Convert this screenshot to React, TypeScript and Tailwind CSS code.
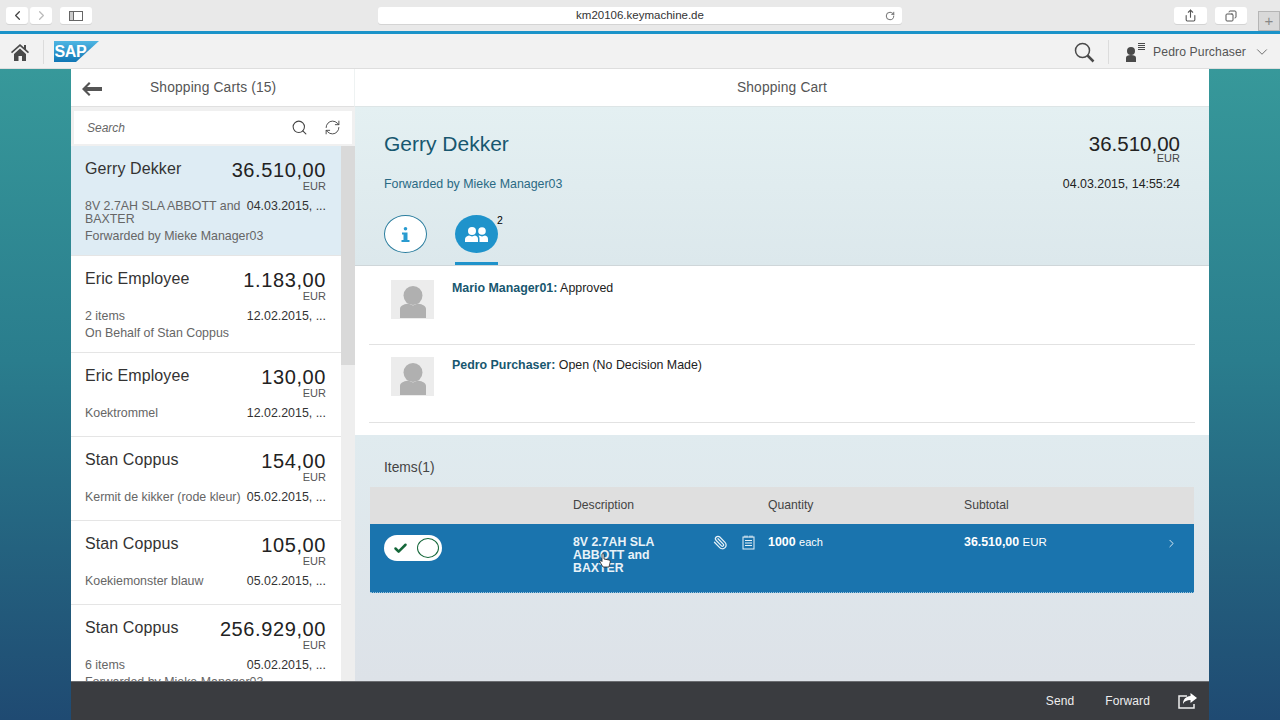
import { ChevronLeft, ChevronRight, ChevronDown, Search, RefreshCw, Share, Copy, RotateCw, Paperclip, Check } from "lucide-react";

const carts = [
  { name: "Gerry Dekker", amount: "36.510,00", desc: "8V 2.7AH SLA ABBOTT and BAXTER", date: "04.03.2015, ...", note: "Forwarded by Mieke Manager03", h: "h-[110px]", selected: true },
  { name: "Eric Employee", amount: "1.183,00", desc: "2 items", date: "12.02.2015, ...", note: "On Behalf of Stan Coppus", h: "h-[97px]", selected: false },
  { name: "Eric Employee", amount: "130,00", desc: "Koektrommel", date: "12.02.2015, ...", note: "", h: "h-[84px]", selected: false },
  { name: "Stan Coppus", amount: "154,00", desc: "Kermit de kikker (rode kleur)", date: "05.02.2015, ...", note: "", h: "h-[84px]", selected: false },
  { name: "Stan Coppus", amount: "105,00", desc: "Koekiemonster blauw", date: "05.02.2015, ...", note: "", h: "h-[84px]", selected: false },
  { name: "Stan Coppus", amount: "256.929,00", desc: "6 items", date: "05.02.2015, ...", note: "Forwarded by Mieke Manager03", h: "h-[97px]", selected: false },
];

function Avatar() {
  return (
    <div className="w-[43px] h-[39px] bg-[#ececec] shrink-0 flex items-end justify-center">
      <svg width="28" height="33" viewBox="0 0 28 33" fill="#b0b0b0">
        <circle cx="14" cy="9.500" r="9.500" />
        <path d="M1 32V23c0-3 3-4.500 8-5.500l5 2 5-2c5 1 8 2.500 8 5.500v9z" />
      </svg>
    </div>
  );
}

function ToolButton({ children, w }: { children: React.ReactNode; w: string }) {
  return <div className={`${w} h-[17px] bg-white rounded-[3px] flex items-center justify-center shadow-[0_1px_0_#d4d4d4]`}>{children}</div>;
}

export default function App() {
  return (
    <div className="relative w-[1280px] h-[720px] overflow-hidden flex flex-col font-['Liberation_Sans',Arial,sans-serif] bg-gradient-to-b from-[#3a9f9d] via-[#2a7d8d] to-[#1f4a72]">
      {/* Browser toolbar */}
      <div className="h-[31px] shrink-0 bg-[#e9e9e9] flex items-start pt-[7px] pl-[6px] pr-[33px]">
        <ToolButton w="w-[22px]"><ChevronLeft size={15} className="text-[#444]" /></ToolButton>
        <div className="ml-[2px]"><ToolButton w="w-[22px]"><ChevronRight size={15} className="text-[#bbb]" /></ToolButton></div>
        <div className="ml-[8px]">
          <ToolButton w="w-[32px]">
            <div className="w-[14px] h-[10px] border border-[#666] flex"><div className="w-[4px] border-r border-[#666] bg-[#ccc]" /></div>
          </ToolButton>
        </div>
        <div className="ml-[286px] w-[524px] h-[17px] bg-white rounded-[3px] relative flex items-center justify-center text-[11.500px] text-[#333] shadow-[0_1px_0_#d4d4d4]">
          km20106.keymachine.de
          <RotateCw size={10} className="absolute right-[7px] text-[#555]" />
        </div>
        <div className="ml-auto flex gap-[8px]">
          <ToolButton w="w-[33px]"><Share size={13} className="text-[#555]" /></ToolButton>
          <ToolButton w="w-[32px]"><Copy size={12} className="text-[#555] -scale-x-100" /></ToolButton>
        </div>
      </div>
      <div className="absolute left-[1258px] top-[11px] w-[22px] h-[20px] bg-[#d9d9d9] border border-[#b5b5b5] text-[#888] text-[15px] leading-[18px] text-center">+</div>
      <div className="h-[3px] shrink-0 bg-[#1b93c9]" />

      {/* Shell header */}
      <div className="h-[35px] shrink-0 bg-[#f2f2f2] flex items-center border-b border-[#dedede] pt-[2px]">
        <svg className="ml-[11px]" width="18" height="17" viewBox="0 0 18 17" fill="#4a4a4a">
          <path d="M9 0 0 8l1 1.200L9 2.200l8 7L18 8l-3-2.700V1h-2v2.500z" />
          <path d="M3 10 9 4.500l6 5.500v7h-4v-5H7.500v5H3z" />
        </svg>
        <div className="ml-[14px] w-px h-[24px] bg-[#dcdcdc]" />
        <svg className="ml-[10px] -mt-[2px]" width="45" height="21" viewBox="0 0 45 21">
          <defs>
            <linearGradient id="sapBlue" x1="0" y1="0" x2="0" y2="1">
              <stop offset="0" stopColor="#4fb6e3" />
              <stop offset="1" stopColor="#0f76b5" />
            </linearGradient>
          </defs>
          <path d="M0 0h45L22 21H0z" fill="url(#sapBlue)" />
          <text x="0.500" y="16" fontSize="16" fontWeight="700" fill="#fff" fontFamily="Liberation Sans" letterSpacing="-0.4">SAP</text>
        </svg>
        <div className="ml-auto flex items-center">
          <svg width="21" height="21" viewBox="0 0 21 21" fill="none" stroke="#4a4a4a">
            <circle cx="8.500" cy="8.500" r="7" strokeWidth="1.500" />
            <path d="m13.500 13.500 6 6" strokeWidth="2.500" />
          </svg>
          <div className="ml-[13px] w-px h-[24px] bg-[#dcdcdc]" />
          <svg className="ml-[16px]" width="21" height="20" viewBox="0 0 21 20" fill="#4a4a4a">
            <circle cx="6" cy="9" r="4" />
            <path d="M1 20v-4.500c0-1.500 2-2.500 5-2.500s5 1 5 2.500V20z" />
            <path d="M13 1h7v1h-7zM13 3h7v1h-7zM13 5h7v1h-7zM13 7h7v1h-7z" />
          </svg>
          <span className="ml-[7px] text-[12.200px] text-[#555] tracking-[0.1px]">Pedro Purchaser</span>
          <ChevronDown size={18} strokeWidth={1} className="ml-[7px] mr-[9px] text-[#444]" />
        </div>
      </div>

      {/* App area */}
      <div className="flex-1 min-h-0 mx-[71px] flex flex-col">
        <div className="flex-1 min-h-0 flex">
          {/* Master list */}
          <div className="w-[284px] shrink-0 flex flex-col bg-white">
            <div className="h-[38px] shrink-0 flex items-center border-b border-r border-b-[#e0e0e0] border-r-[#eef2f2] pt-[2px]">
              <svg className="ml-[11px]" width="20" height="14" viewBox="0 0 20 14" fill="#555">
                <path d="M7 0 0 7l7 7 1.500-1.500L5 9h15V5H5l3.500-3.500z" />
              </svg>
              <span className="ml-[48px] text-[13.800px] text-[#555] tracking-[0.15px] whitespace-nowrap">Shopping Carts (15)</span>
            </div>
            <div className="h-[39px] shrink-0 bg-[#f0f0f0] px-[3px] pt-[4px] pb-[2px]">
              <div className="h-[33px] bg-white flex items-center pl-[13px]">
                <span className="italic text-[12px] text-[#666]">Search</span>
                <Search size={17} strokeWidth={1.500} className="ml-auto text-[#444]" />
                <RefreshCw size={17} strokeWidth={1.300} className="ml-[16px] mr-[11px] text-[#444]" />
              </div>
            </div>
            <div className="flex-1 min-h-0 flex overflow-hidden">
              <div className="w-[270px] shrink-0">
                {carts.map((cart, i) => (
                  <div key={i} className={`${cart.h} pl-[14px] pr-[15px] pt-[12px] border-b border-[#e5e5e5] ${cart.selected ? "bg-[#deecf4]" : "bg-white"}`}>
                    <div className="flex items-start justify-between">
                      <span className="text-[16px] leading-[22px] text-[#333] tracking-[0.1px]">{cart.name}</span>
                      <span className="text-[20px] leading-[24px] text-[#222] tracking-[0.6px]">{cart.amount}</span>
                    </div>
                    <div className="text-right text-[11px] leading-[9px] text-[#555]">EUR</div>
                    <div className="mt-[9px] flex justify-between items-start text-[12.400px] leading-[13px]">
                      <span className="text-[#666] w-[160px]">{cart.desc}</span>
                      <span className="text-[#333] whitespace-nowrap">{cart.date}</span>
                    </div>
                    {cart.note && <div className="mt-[4px] text-[12.400px] leading-[13px] text-[#666]">{cart.note}</div>}
                  </div>
                ))}
              </div>
              <div className="flex-1 bg-[#eeeeee]">
                <div className="h-[219px] bg-[#d9d9d9]" />
              </div>
            </div>
          </div>

          {/* Detail */}
          <div className="flex-1 min-w-0 flex flex-col bg-[#dfe6ea]">
            <div className="h-[38px] shrink-0 bg-white border-b border-[#dde5e6] flex items-center justify-center text-[13.800px] text-[#555] tracking-[0.15px] pt-[2px]">Shopping Cart</div>
            <div className="h-[159px] shrink-0 bg-gradient-to-b from-[#e4f0f2] to-[#dce8ec] px-[29px] pt-[25px] border-b border-[#cfd6d9]">
              <div className="flex justify-between">
                <span className="text-[21px] leading-[24px] text-[#17576f]">Gerry Dekker</span>
                <div className="text-right pt-[3px]">
                  <div className="text-[20.500px] leading-[18px] text-[#222]">36.510,00</div>
                  <div className="text-[11px] leading-[10px] text-[#444]">EUR</div>
                </div>
              </div>
              <div className="mt-[14px] flex justify-between text-[12.400px] leading-[14px]">
                <span className="text-[#2a6a84]">Forwarded by Mieke Manager03</span>
                <span className="text-[#222]">04.03.2015, 14:55:24</span>
              </div>
              <div className="mt-[24px] flex gap-[28px]">
                <div className="w-[43px] h-[38px] rounded-[50%] bg-white border border-[#2a7d9e] flex items-center justify-center">
                  <svg width="9" height="15" viewBox="0 0 9 15" fill="#2a9bd0">
                    <circle cx="4.500" cy="1.800" r="1.800" />
                    <path d="M1 5.500h5.500V13H8.500v2H.5v-2h2V7.500H1z" />
                  </svg>
                </div>
                <div className="relative w-[43px]">
                  <div className="w-[43px] h-[38px] rounded-[50%] bg-[#1f93cb] flex items-center justify-center">
                    <svg width="23" height="15" viewBox="0 0 23 15" fill="#fff">
                      <circle cx="7" cy="4" r="4" />
                      <path d="M0 15v-3c0-2 2-3 4-3.500L7 9.500l3-1c2 .5 3 1.500 3 3.500v3z" />
                      <circle cx="17" cy="4" r="3.800" />
                      <path d="M14.500 15v-3.500c0-1-.3-2-1-2.700l.7-.3 2.800 1 3-1c2 .5 3 1.500 3 3.500v3.500z" />
                    </svg>
                  </div>
                  <span className="absolute left-[42px] top-0 text-[10.500px] leading-[11px] text-black">2</span>
                  <div className="mt-[9px] h-[3px] bg-[#1f93cb]" />
                </div>
              </div>
            </div>

            {/* Approvers */}
            <div className="h-[169px] shrink-0 bg-white px-[14px]">
              <div className="h-[79px] border-b border-[#e2e2e2] pl-[22px] pt-[14px] flex">
                <Avatar />
                <div className="ml-[18px] mt-[1px] text-[12.400px] leading-[14px] text-[#222]"><b className="text-[#17576f]">Mario Manager01:</b> Approved</div>
              </div>
              <div className="h-[78px] border-b border-[#e2e2e2] pl-[22px] pt-[12px] flex">
                <Avatar />
                <div className="ml-[18px] mt-[1px] text-[12.400px] leading-[14px] text-[#222]"><b className="text-[#17576f]">Pedro Purchaser:</b> Open (No Decision Made)</div>
              </div>
            </div>

            {/* Items */}
            <div className="flex-1 min-h-0 bg-gradient-to-b from-[#e0ebef] to-[#dde2e8] px-[15px]">
              <div className="pt-[25px] pl-[14px] h-[52px] text-[13.800px] leading-[15px] text-[#444]">Items(1)</div>
              <div className="h-[37px] bg-[#dfdfdf] flex items-center text-[12.200px] text-[#444]">
                <span className="ml-[203px] w-[195px]">Description</span>
                <span className="w-[196px]">Quantity</span>
                <span>Subtotal</span>
              </div>
              <div className="h-[69px] bg-[#1a74ae] border-b border-dotted border-[#9cc4dc] flex items-start text-white relative">
                <div className="ml-[14px] mt-[11px] w-[58px] h-[26px] rounded-full bg-white flex items-center pl-[9px]">
                  <Check size={15} strokeWidth={4} className="text-[#15673a]" />
                  <div className="ml-[9px] w-[22px] h-[20px] rounded-[50%] border-[1.500px] border-[#15673a]" />
                </div>
                <div className="ml-[131px] mt-[12px] w-[100px] text-[12.300px] leading-[13px] font-bold text-[#e8f2f8]">8V 2.7AH SLA ABBOTT and BAXTER</div>
                <Paperclip size={15} className="ml-[40px] mt-[11px] text-[#e8f2f8] -scale-x-100" />
                <svg className="ml-[14px] mt-[11px]" width="13" height="15" viewBox="0 0 13 15" fill="none" stroke="#e8f2f8">
                  <rect x="1" y="2" width="11" height="12" />
                  <path d="M3 5.500h7M3 8h7M3 10.500h7M3 .5v2M5 .5v2M8 .5v2M10 .5v2" />
                </svg>
                <div className="ml-[13px] mt-[12px] w-[196px] text-[12.400px] leading-[13px] font-bold">1000 <span className="font-normal text-[11px]">each</span></div>
                <div className="mt-[12px] text-[12.400px] leading-[13px] font-bold">36.510,00 <span className="font-normal text-[11.500px]">EUR</span></div>
                <ChevronRight size={13} strokeWidth={1.500} className="absolute right-[16px] top-[13px] text-white" />
                {/* pointer cursor */}
                <svg className="absolute left-[229px] top-[29px]" width="12" height="15" viewBox="0 0 12 15" fill="#fff" stroke="#222" strokeWidth="0.800">
                  <path d="M3 1.500c0-1 2-1 2 0V6l5 1c1 .3 1.500 1 1.200 2L10 14H4L1 9c-.5-1 1-2 2-.5z" />
                </svg>
              </div>
            </div>
          </div>
        </div>

        {/* Footer */}
        <div className="h-[39px] shrink-0 bg-[#3a3c40] border-t border-[#6a6c70] flex items-center justify-end text-[12px] text-[#eeeeee] tracking-[0.1px]">
          <span>Send</span>
          <span className="ml-[31px]">Forward</span>
          <svg className="ml-[28px] mr-[12px]" width="19" height="16" viewBox="0 0 19 16" fill="none">
            <path d="M9 3H1v12h15v-4" stroke="#eee" strokeWidth="1.500" />
            <path d="M12.500 0 19 5l-6.500 5V7C9 7 6.500 8 5 11c0-5 3-7.500 7.500-8z" fill="#fff" />
          </svg>
        </div>
      </div>
    </div>
  );
}
